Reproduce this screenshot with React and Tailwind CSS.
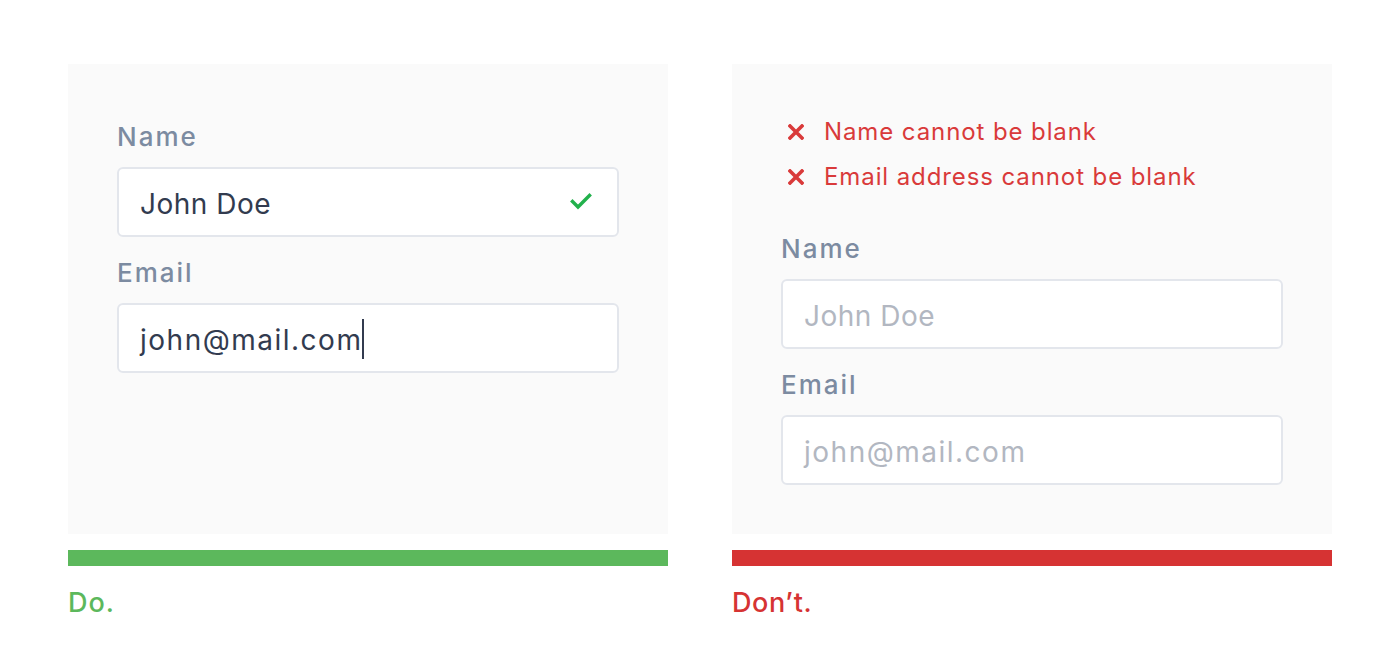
import React from "react";

const font = { fontFamily: "Inter, 'Noto Sans', sans-serif" };

function Check() {
  return (
    <svg width="22" height="18" viewBox="0 0 22 18" className="mr-[1px] shrink-0">
      <path d="M2.5 8.5 L8 14 L19.5 2.5" fill="none" stroke="#22b14c" strokeWidth="3.4" strokeLinecap="square" strokeLinejoin="miter" />
    </svg>
  );
}

function XIcon() {
  return (
    <svg width="16" height="16" viewBox="0 0 16 16" className="shrink-0">
      <path d="M2 2 L14 14 M14 2 L2 14" fill="none" stroke="#d93a3a" strokeWidth="3.6" strokeLinecap="square" />
    </svg>
  );
}

function Label({ children, className = "" }) {
  return (
    <div className={`h-[36px] pt-[1px] text-[26px] font-medium leading-[36px] tracking-[2px] text-[#7c8ba1] ${className}`}>{children}</div>
  );
}

function Field({ children }) {
  return (
    <div className="mt-[13px] flex h-[70px] w-[502px] items-center rounded-[6px] border-2 border-[#e3e6ec] bg-white pl-[21px] pr-[24px]">
      {children}
    </div>
  );
}

export default function App() {
  return (
    <div className="flex h-[670px] w-[1400px] gap-[64px] bg-white pl-[68px] pt-[64px]" style={font}>
      <div className="flex w-[600px] flex-col">
        <div className="h-[470px] bg-[#fafafa] pl-[49px] pt-[54px]">
          <Label>Name</Label>
          <Field>
            <span className="flex-1 pt-[3px] text-[28px] tracking-[0.5px] text-[#323b4f]">John Doe</span>
            <Check />
          </Field>
          <Label className="mt-[17px]">Email</Label>
          <Field>
            <span className="pt-[3px] text-[28px] tracking-[1.5px] text-[#323b4f]">john@mail.com</span>
            <span className="mt-[2px] h-[40px] w-[2px] bg-[#323b4f]" />
          </Field>
        </div>
        <div className="mt-[16px] h-[16px] bg-[#5cb85c]" />
        <div className="mt-[22px] text-[27px] font-medium leading-[30px] tracking-[1px] text-[#5cb85c]">Do.</div>
      </div>
      <div className="flex w-[600px] flex-col">
        <div className="h-[470px] bg-[#fafafa] pl-[49px] pt-[52px]">
          <div className="flex flex-col gap-[13px] text-[24px] leading-[32px] tracking-[0.9px] text-[#d93a3a]">
            <div className="flex items-center gap-[20px] pl-[7px]"><XIcon /><span>Name cannot be blank</span></div>
            <div className="flex items-center gap-[20px] pl-[7px]"><XIcon /><span>Email address cannot be blank</span></div>
          </div>
          <Label className="mt-[37px]">Name</Label>
          <Field>
            <span className="pt-[3px] text-[28px] tracking-[0.5px] text-[#b2b7c1]">John Doe</span>
          </Field>
          <Label className="mt-[17px]">Email</Label>
          <Field>
            <span className="pt-[3px] text-[28px] tracking-[1.5px] text-[#b2b7c1]">john@mail.com</span>
          </Field>
        </div>
        <div className="mt-[16px] h-[16px] bg-[#d63333]" />
        <div className="mt-[22px] text-[27px] font-medium leading-[30px] tracking-[0.6px] text-[#d63333]">Don’t.</div>
      </div>
    </div>
  );
}
